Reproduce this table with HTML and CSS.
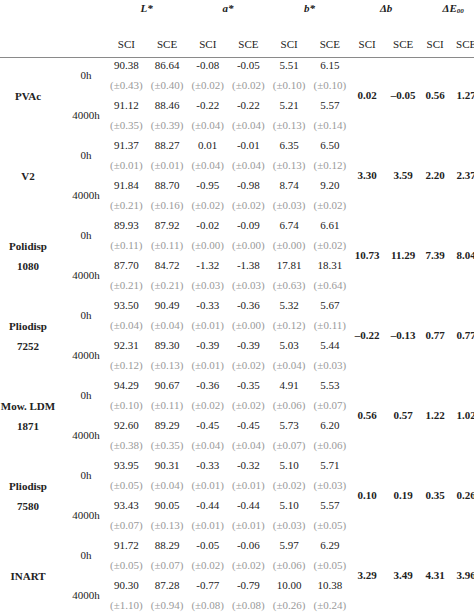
FILE: index.html
```html
<!DOCTYPE html>
<html>
<head>
<meta charset="utf-8">
<link rel="stylesheet" href="styles.css">
</head>
<body>
<div class="wrap">
<table class="tbl">
<colgroup>
<col class="c-name"><col class="c-time">
<col class="c-val"><col class="c-val"><col class="c-val"><col class="c-val"><col class="c-val"><col class="c-val">
<col class="c-db1"><col class="c-db2"><col class="c-de1"><col class="c-de2">
</colgroup>
<thead>
<tr class="h1">
<th></th><th></th>
<th colspan="2"><i>L*</i></th>
<th colspan="2"><i>a*</i></th>
<th colspan="2"><i>b*</i></th>
<th colspan="2"><i>Δb</i></th>
<th colspan="2"><i>ΔE<sub>00</sub></i></th>
</tr>
<tr class="h2">
<th></th><th></th>
<th>SCI</th><th>SCE</th><th>SCI</th><th>SCE</th><th>SCI</th><th>SCE</th>
<th>SCI</th><th>SCE</th><th>SCI</th><th>SCE</th>
</tr>
</thead>
<tbody>
<!-- PVAc -->
<tr><td class="name" rowspan="4">PVAc</td><td class="time" rowspan="2">0h</td>
<td>90.38</td><td>86.64</td><td>-0.08</td><td>-0.05</td><td>5.51</td><td>6.15</td>
<td class="d" rowspan="4">0.02</td><td class="d" rowspan="4">–0.05</td><td class="d" rowspan="4">0.56</td><td class="d" rowspan="4">1.27</td></tr>
<tr class="sd"><td>(±0.43)</td><td>(±0.40)</td><td>(±0.02)</td><td>(±0.02)</td><td>(±0.10)</td><td>(±0.10)</td></tr>
<tr><td class="time" rowspan="2">4000h</td><td>91.12</td><td>88.46</td><td>-0.22</td><td>-0.22</td><td>5.21</td><td>5.57</td></tr>
<tr class="sd"><td>(±0.35)</td><td>(±0.39)</td><td>(±0.04)</td><td>(±0.04)</td><td>(±0.13)</td><td>(±0.14)</td></tr>
<!-- V2 -->
<tr><td class="name" rowspan="4">V2</td><td class="time" rowspan="2">0h</td>
<td>91.37</td><td>88.27</td><td>0.01</td><td>-0.01</td><td>6.35</td><td>6.50</td>
<td class="d" rowspan="4">3.30</td><td class="d" rowspan="4">3.59</td><td class="d" rowspan="4">2.20</td><td class="d" rowspan="4">2.37</td></tr>
<tr class="sd"><td>(±0.01)</td><td>(±0.01)</td><td>(±0.04)</td><td>(±0.04)</td><td>(±0.13)</td><td>(±0.12)</td></tr>
<tr><td class="time" rowspan="2">4000h</td><td>91.84</td><td>88.70</td><td>-0.95</td><td>-0.98</td><td>8.74</td><td>9.20</td></tr>
<tr class="sd"><td>(±0.21)</td><td>(±0.16)</td><td>(±0.02)</td><td>(±0.02)</td><td>(±0.03)</td><td>(±0.02)</td></tr>
<!-- Polidisp 1080 -->
<tr><td class="name" rowspan="4">Polidisp<br>1080</td><td class="time" rowspan="2">0h</td>
<td>89.93</td><td>87.92</td><td>-0.02</td><td>-0.09</td><td>6.74</td><td>6.61</td>
<td class="d" rowspan="4">10.73</td><td class="d" rowspan="4">11.29</td><td class="d" rowspan="4">7.39</td><td class="d" rowspan="4">8.04</td></tr>
<tr class="sd"><td>(±0.11)</td><td>(±0.11)</td><td>(±0.00)</td><td>(±0.00)</td><td>(±0.00)</td><td>(±0.02)</td></tr>
<tr><td class="time" rowspan="2">4000h</td><td>87.70</td><td>84.72</td><td>-1.32</td><td>-1.38</td><td>17.81</td><td>18.31</td></tr>
<tr class="sd"><td>(±0.21)</td><td>(±0.21)</td><td>(±0.03)</td><td>(±0.03)</td><td>(±0.63)</td><td>(±0.64)</td></tr>
<!-- Pliodisp 7252 -->
<tr><td class="name" rowspan="4">Pliodisp<br>7252</td><td class="time" rowspan="2">0h</td>
<td>93.50</td><td>90.49</td><td>-0.33</td><td>-0.36</td><td>5.32</td><td>5.67</td>
<td class="d" rowspan="4">–0.22</td><td class="d" rowspan="4">–0.13</td><td class="d" rowspan="4">0.77</td><td class="d" rowspan="4">0.77</td></tr>
<tr class="sd"><td>(±0.04)</td><td>(±0.04)</td><td>(±0.01)</td><td>(±0.00)</td><td>(±0.12)</td><td>(±0.11)</td></tr>
<tr><td class="time" rowspan="2">4000h</td><td>92.31</td><td>89.30</td><td>-0.39</td><td>-0.39</td><td>5.03</td><td>5.44</td></tr>
<tr class="sd"><td>(±0.12)</td><td>(±0.13)</td><td>(±0.01)</td><td>(±0.02)</td><td>(±0.04)</td><td>(±0.03)</td></tr>
<!-- Mow. LDM 1871 -->
<tr><td class="name" rowspan="4">Mow. LDM<br>1871</td><td class="time" rowspan="2">0h</td>
<td>94.29</td><td>90.67</td><td>-0.36</td><td>-0.35</td><td>4.91</td><td>5.53</td>
<td class="d" rowspan="4">0.56</td><td class="d" rowspan="4">0.57</td><td class="d" rowspan="4">1.22</td><td class="d" rowspan="4">1.02</td></tr>
<tr class="sd"><td>(±0.10)</td><td>(±0.11)</td><td>(±0.02)</td><td>(±0.02)</td><td>(±0.06)</td><td>(±0.07)</td></tr>
<tr><td class="time" rowspan="2">4000h</td><td>92.60</td><td>89.29</td><td>-0.45</td><td>-0.45</td><td>5.73</td><td>6.20</td></tr>
<tr class="sd"><td>(±0.38)</td><td>(±0.35)</td><td>(±0.04)</td><td>(±0.04)</td><td>(±0.07)</td><td>(±0.06)</td></tr>
<!-- Pliodisp 7580 -->
<tr><td class="name" rowspan="4">Pliodisp<br>7580</td><td class="time" rowspan="2">0h</td>
<td>93.95</td><td>90.31</td><td>-0.33</td><td>-0.32</td><td>5.10</td><td>5.71</td>
<td class="d" rowspan="4">0.10</td><td class="d" rowspan="4">0.19</td><td class="d" rowspan="4">0.35</td><td class="d" rowspan="4">0.26</td></tr>
<tr class="sd"><td>(±0.05)</td><td>(±0.04)</td><td>(±0.01)</td><td>(±0.01)</td><td>(±0.02)</td><td>(±0.03)</td></tr>
<tr><td class="time" rowspan="2">4000h</td><td>93.43</td><td>90.05</td><td>-0.44</td><td>-0.44</td><td>5.10</td><td>5.57</td></tr>
<tr class="sd"><td>(±0.07)</td><td>(±0.13)</td><td>(±0.01)</td><td>(±0.01)</td><td>(±0.03)</td><td>(±0.05)</td></tr>
<!-- INART -->
<tr><td class="name" rowspan="4">INART</td><td class="time" rowspan="2">0h</td>
<td>91.72</td><td>88.29</td><td>-0.05</td><td>-0.06</td><td>5.97</td><td>6.29</td>
<td class="d" rowspan="4">3.29</td><td class="d" rowspan="4">3.49</td><td class="d" rowspan="4">4.31</td><td class="d" rowspan="4">3.96</td></tr>
<tr class="sd"><td>(±0.05)</td><td>(±0.07)</td><td>(±0.02)</td><td>(±0.02)</td><td>(±0.06)</td><td>(±0.05)</td></tr>
<tr><td class="time" rowspan="2">4000h</td><td>90.30</td><td>87.28</td><td>-0.77</td><td>-0.79</td><td>10.00</td><td>10.38</td></tr>
<tr class="sd"><td>(±1.10)</td><td>(±0.94)</td><td>(±0.08)</td><td>(±0.08)</td><td>(±0.26)</td><td>(±0.24)</td></tr>
</tbody>
</table>
</div>
</body>
</html>
```
FILE: styles.css
```css
html, body {
  margin: 0;
  padding: 0;
  background: #fff;
  overflow: hidden;
}
.wrap {
  width: 474px;
  height: 612px;
  overflow: hidden;
}
.tbl {
  border-collapse: collapse;
  table-layout: fixed;
  width: 484px;
  font-family: "Liberation Serif", "Times New Roman", serif;
  font-size: 11px;
  color: #222;
}
.c-name { width: 56px; }
.c-time { width: 50px; }
.c-val { width: 40.7px; }
.c-db1 { width: 34px; }
.c-db2 { width: 38px; }
.c-de1 { width: 26px; }
.c-de2 { width: 36px; }
.tbl th, .tbl td {
  padding: 0;
  text-align: center;
  white-space: nowrap;
  font-weight: normal;
}
.tbl td {
  height: 15px;
  line-height: 15px;
  padding-bottom: 5px;
  vertical-align: middle;
}
.h1 th {
  height: 16px;
  line-height: 16px;
  font-weight: bold;
  vertical-align: middle;
}
.h1 th i { font-style: italic; }
.h1 sub {
  font-size: 7px;
  vertical-align: -1px;
  line-height: 0;
}
.h2 th {
  height: 38px;
  line-height: 20px;
  vertical-align: bottom;
  padding-bottom: 3px;
  border-bottom: 1px solid #8a8a8a;
}
.tbl td.name {
  font-weight: bold;
  line-height: 20px;
}
.tbl td.time {
  padding-left: 10px;
}
.tbl td.d {
  font-weight: bold;
}
.sd td {
  color: #9a9a9a;
}
```
